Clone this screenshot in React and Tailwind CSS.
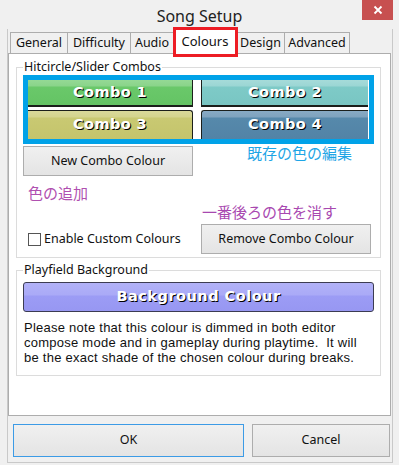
import React from "react";

const UI = "font-['Noto_Sans','Noto_Sans_CJK_JP',sans-serif]";
const JP = "font-['Noto_Sans_CJK_JP',sans-serif]";
const BOLD = "font-['DejaVu_Sans',sans-serif] font-bold";

function Tab({ label, w, selected }) {
  if (selected) {
    return (
      <div className={`relative z-10 -ml-px -mb-px h-[26px] ${w} border border-b-0 border-[#adadad] bg-white flex items-start justify-center pt-[3px] text-[13px] text-[#111]`}>
        {label}
        <div className="absolute -left-px -right-[2px] -top-[2px] -bottom-[3px] border-[3px] border-[#ed1c24]" />
      </div>
    );
  }
  return (
    <div className={`-ml-px h-[21px] ${w} border border-b-0 border-[#adadad] bg-[#f0f0f0] flex items-center justify-center text-[12.5px] text-[#111] first:ml-0`}>
      {label}
    </div>
  );
}

function Combo({ label, bg, border }) {
  return (
    <div className={`flex items-center justify-center ${bg} ${border} border-[#1b1f1b]`}>
      <span className={`${BOLD} text-[14.5px] text-white tracking-[0.4px] [text-shadow:1px_1px_0_#000]`}>{label}</span>
    </div>
  );
}

function WinButton({ children, cls }) {
  return (
    <button className={`flex items-center justify-center border bg-[linear-gradient(to_bottom,#f0f0f0,#e4e4e4)] text-[12.5px] text-[#111] ${cls}`}>
      {children}
    </button>
  );
}

export default function App() {
  return (
    <div className={`w-[399px] h-[465px] bg-[#f0f0f0] ${UI} overflow-hidden`}>
      {/* title bar */}
      <div className="relative h-[29px] flex items-center justify-center">
        <span className="text-[16px] text-[#222] mt-[2px]">Song Setup</span>
        <div className="absolute right-[6px] top-0 w-[31px] h-[20px] bg-[#c75050] flex items-center justify-center">
          <svg width="10" height="10" viewBox="0 0 10 10">
            <path d="M1.5 1.5 L8.5 8.5 M8.5 1.5 L1.5 8.5" stroke="#fff" strokeWidth="1.8" />
          </svg>
        </div>
      </div>

      {/* client area */}
      <div className="ml-[7px] w-[386px] border-x border-b border-[#c9c9c9] pb-[5px]">
        {/* tabs */}
        <div className="h-[24px] flex items-end pl-[2px]">
          <Tab label="General" w="w-[58px]" />
          <Tab label="Difficulty" w="w-[64px]" />
          <Tab label="Audio" w="w-[44px]" />
          <Tab label="Colours" w="w-[64px]" selected />
          <Tab label="Design" w="w-[49px]" />
          <Tab label="Advanced" w="w-[66px]" />
        </div>

        {/* panel */}
        <div className="w-[383px] h-[363px] border border-[#adadad] bg-white pt-[5px]">
          <fieldset className="ml-[7px] w-[365px] h-[199px] border border-[#dcdcdc] pl-[6px] pr-[6px]">
            <legend className="px-[1px] text-[12.5px] leading-[16px] text-[#111]">Hitcircle/Slider Combos</legend>
            <div className="w-[351px] h-[69px] border-[5px] border-[#00a2e8] bg-white grid grid-cols-[165px_167px] grid-rows-[27px_29px] gap-x-[8px] gap-y-[3px]">
              <Combo label="Combo 1" bg="bg-[linear-gradient(to_bottom,#95d995_0,#8ad48a_6px,#6ac86a_7px,#64c464_100%)]" border="border-r border-b-2" />
              <Combo label="Combo 2" bg="bg-[linear-gradient(to_bottom,#a6dbd9_0,#9bd6d4_6px,#7ecac7_7px,#79c6c3_100%)]" border="border-l border-b-2" />
              <Combo label="Combo 3" bg="bg-[linear-gradient(to_bottom,#d9d99a_0,#d4d48e_6px,#c9c972_7px,#c4c46c_100%)]" border="border-r border-t rounded-tr-[3px]" />
              <Combo label="Combo 4" bg="bg-[linear-gradient(to_bottom,#88aac4_0,#7fa3be_6px,#5689ab_7px,#5283a6_100%)]" border="border-l border-t rounded-tl-[3px]" />
            </div>

            <div className="flex items-start mt-[2px]">
              <WinButton cls="w-[170px] h-[30px] border-[#adadad]">New Combo Colour</WinButton>
              <span className={`${JP} ml-[54px] -mt-[2px] text-[15px] leading-[18px] text-[#1ea5e6]`}>既存の色の編集</span>
            </div>

            <div className={`${JP} mt-[8px] ml-[5px] text-[15px] leading-[18px] text-[#b050b0]`}>色の追加</div>
            <div className={`${JP} mt-[1px] ml-[179px] text-[15px] leading-[18px] text-[#a848b0]`}>一番後ろの色を消す</div>

            <div className="flex items-center mt-[3px]">
              <div className="ml-[5px] w-[13px] h-[13px] border border-[#555] bg-white" />
              <span className="ml-[3px] text-[12.5px] text-[#111]">Enable Custom Colours</span>
              <WinButton cls="ml-auto mr-[3px] w-[170px] h-[30px] border-[#adadad]">Remove Combo Colour</WinButton>
            </div>
          </fieldset>

          <fieldset className="ml-[7px] mt-[4px] w-[365px] h-[114px] border border-[#dcdcdc] pl-[6px] pr-[6px]">
            <legend className="px-[1px] text-[12.5px] leading-[16px] text-[#111]">Playfield Background</legend>
            <div className="mt-[4px] w-[351px] h-[30px] rounded-[3px] border border-[#3c3c52] bg-[linear-gradient(to_bottom,#b2b2f8_0,#aaaaf7_12px,#9c9cf5_13px,#9797f2_100%)] flex items-center justify-center">
              <span className={`${BOLD} text-[14.5px] text-white tracking-[0.5px] [text-shadow:1px_1px_0_#000]`}>Background Colour</span>
            </div>
            <div className="mt-[8px] ml-[1px] font-['Liberation_Sans',sans-serif] text-[13px] leading-[15px] tracking-[0.25px] text-[#111] whitespace-pre">
              <div>Please note that this colour is dimmed in both editor</div>
              <div>compose mode and in gameplay during playtime.  It will</div>
              <div>be the exact shade of the chosen colour during breaks.</div>
            </div>
          </fieldset>
        </div>

        {/* bottom buttons */}
        <div className="flex mt-[8px] ml-[5px] gap-[8px]">
          <WinButton cls="w-[231px] h-[33px] border-[#3c9be6]">OK</WinButton>
          <WinButton cls="w-[138px] h-[33px] border-[#adadad]">Cancel</WinButton>
        </div>
      </div>
    </div>
  );
}
